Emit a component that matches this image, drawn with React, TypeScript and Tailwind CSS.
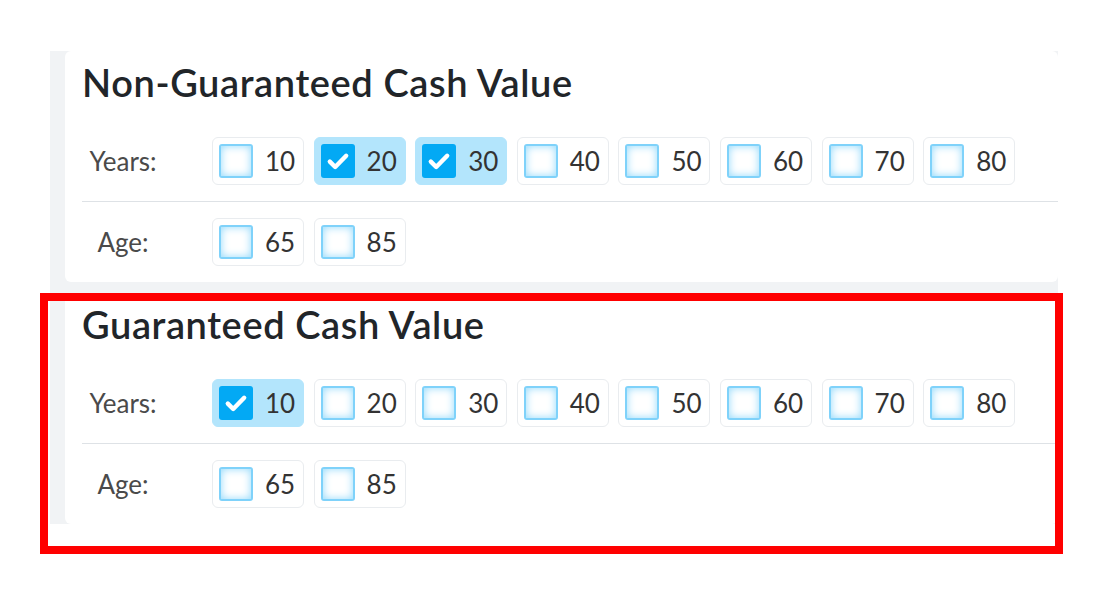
import React from 'react';

type Option = { value: number; checked?: boolean };

type Section = {
  title: string;
  years: Option[];
  ages: Option[];
};

const sections: Section[] = [
  {
    title: 'Non-Guaranteed Cash Value',
    years: [
      { value: 10 },
      { value: 20, checked: true },
      { value: 30, checked: true },
      { value: 40 },
      { value: 50 },
      { value: 60 },
      { value: 70 },
      { value: 80 },
    ],
    ages: [{ value: 65 }, { value: 85 }],
  },
  {
    title: 'Guaranteed Cash Value',
    years: [
      { value: 10, checked: true },
      { value: 20 },
      { value: 30 },
      { value: 40 },
      { value: 50 },
      { value: 60 },
      { value: 70 },
      { value: 80 },
    ],
    ages: [{ value: 65 }, { value: 85 }],
  },
];

function CheckChip({ value, checked }: Option) {
  return (
    <label
      className={
        checked
          ? 'flex h-[48px] w-[92px] items-center rounded-[6px] border border-[#b3e5fc] bg-[#b3e5fc] pl-[6px]'
          : 'flex h-[48px] w-[92px] items-center rounded-[6px] border border-[#e9ecef] bg-white pl-[6px]'
      }
    >
      {checked ? (
        <span className="flex h-[34px] w-[34px] items-center justify-center rounded-[3px] bg-[#03a9f4]">
          <svg viewBox="0 0 24 24" className="h-[28px] w-[28px]" fill="none">
            <path d="M5 12.5l4.6 4.6L19 7.5" stroke="#fff" strokeWidth="3.8" strokeLinecap="round" strokeLinejoin="round" />
          </svg>
        </span>
      ) : (
        <span className="h-[34px] w-[34px] rounded-[3px] border-2 border-[#7fd2fa] bg-white shadow-[inset_0_0_8px_#8fd8fb]" />
      )}
      <span className="ml-[12px] text-[26px] leading-none text-[#333]">{value}</span>
    </label>
  );
}

function OptionRow({ label, options, last }: { label: string; options: Option[]; last?: boolean }) {
  return (
    <div className={last ? 'flex items-center py-[16px]' : 'flex items-center border-b border-[#dee2e6] py-[16px]'}>
      <div className="w-[82px] text-center text-[26px] leading-none text-[#4a4a4a]">{label}</div>
      <div className="ml-[48px] flex gap-[9.6px]">
        {options.map((o) => (
          <CheckChip key={o.value} {...o} />
        ))}
      </div>
    </div>
  );
}

function CashValueCard({ section }: { section: Section }) {
  return (
    <div className="rounded-md bg-white pl-[17px] pt-[8px]">
      <h2 className="text-[38px] font-semibold leading-[46px] tracking-[0.6px] text-[#212529]">{section.title}</h2>
      <div className="mt-[16px]">
        <OptionRow label="Years:" options={section.years} />
        <OptionRow label="Age:" options={section.ages} last />
      </div>
    </div>
  );
}

export default function App() {
  return (
    <div className="relative h-[594px] w-[1117px] bg-white font-['Lato',sans-serif]">
      <div className="pl-[50px] pt-[51px]">
        <div className="flex w-[1008px] flex-col gap-[11px] bg-[#f1f3f5] pl-[15px]">
          {sections.map((s) => (
            <CashValueCard key={s.title} section={s} />
          ))}
        </div>
      </div>
      {/* highlight frame around the second card */}
      <div className="pointer-events-none absolute left-[40px] top-[293px] h-[261px] w-[1023px] border-[8px] border-[#ff0000]" />
    </div>
  );
}
